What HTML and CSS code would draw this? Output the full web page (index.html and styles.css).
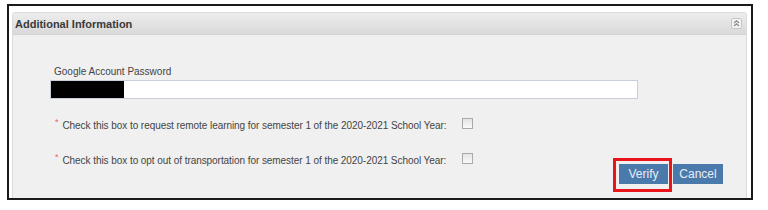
FILE: index.html
```html
<!DOCTYPE html>
<html lang="en">
<head>
  <meta charset="UTF-8" />
  <title>Additional Information</title>
  <link rel="stylesheet" href="styles.css">
</head>
<body>

<div class="frame">
  <div class="panel">
    <div class="panel-header">
      <span class="panel-title">Additional Information</span>
      <span class="collapse-btn">
        <svg width="11" height="11" viewBox="0 0 11 11">
          <rect x="0.5" y="0.5" width="10" height="10" rx="1.5" fill="#f3f3f3" stroke="#c6c6c6"/>
          <path d="M3 5 L5.5 2.8 L8 5 M3 8 L5.5 5.8 L8 8" fill="none" stroke="#8a8a8a" stroke-width="1.1"/>
        </svg>
      </span>
    </div>

    <div class="panel-body">
      <label class="field-label">Google Account Password</label>
      <div class="password-box">
        <div class="redacted"></div>
      </div>

      <div class="footer">
        <div class="checks">
          <div class="check-row">
            <span class="req">*</span>
            <span>Check this box to request remote learning for semester 1 of the 2020-2021 School Year:</span>
            <input type="checkbox" class="check">
          </div>
          <div class="check-row">
            <span class="req">*</span>
            <span>Check this box to opt out of transportation for semester 1 of the 2020-2021 School Year:</span>
            <input type="checkbox" class="check">
          </div>
        </div>

        <div class="actions">
          <span class="highlight">
            <button class="btn">Verify</button>
          </span>
          <button class="btn btn-cancel">Cancel</button>
        </div>
      </div>
    </div>
  </div>
</div>

</body>
</html>
```

FILE: styles.css
```css
* {
  box-sizing: border-box;
}

body {
  margin: 0;
  background: #fff;
  font-family: 'Liberation Sans', Arial, sans-serif;
  color: #333;
}

.frame {
  width: 746px;
  margin: 4px 0 0 7px;
  border: 2px solid #1a1a1a;
  padding: 6px 4px 0 3px;
}

.panel {
  border: 1px solid #dcdcdc;
  border-bottom: none;
  border-radius: 3px 3px 0 0;
  background: #f0f0f0;
}

.panel-header {
  height: 22px;
  display: flex;
  align-items: center;
  justify-content: space-between;
  padding: 0 4px 0 2px;
  background: linear-gradient(#ededed, #d9d9d9);
  border-bottom: 1px solid #d2d2d2;
}

.panel-title {
  font-size: 11px;
  font-weight: bold;
  color: #3a3a3a;
}

.collapse-btn {
  display: flex;
}

.panel-body {
  padding: 31px 23px 6px 37px;
}

.field-label {
  display: block;
  margin-left: 4px;
  font-size: 10px;
  line-height: 12px;
  color: #444;
}

.password-box {
  margin-top: 2px;
  height: 19px;
  width: 588px;
  border: 1px solid #c9cedb;
  background: #fff;
}

.redacted {
  width: 73px;
  height: 100%;
  background: #000;
}

.footer {
  display: flex;
  justify-content: space-between;
}

.checks {
  padding: 19px 0 25px 5px;
}

.check-row {
  display: flex;
  align-items: center;
  height: 14px;
  font-size: 10px;
  letter-spacing: -0.06px;
  color: #444;
}

.check-row + .check-row {
  margin-top: 21px;
}

.req {
  align-self: flex-start;
  margin-right: 4px;
  font-size: 9px;
  line-height: 9px;
  color: #f06060;
}

.check {
  appearance: none;
  width: 11px;
  height: 11px;
  margin: -4px 0 0 16px;
  border: 1px solid #a9a9a9;
  background: linear-gradient(#e4e4e4, #fafafa);
}

.actions {
  align-self: flex-end;
  display: flex;
  align-items: flex-start;
}

.highlight {
  display: flex;
  padding: 3px 1px 5px 3px;
  border: 3px solid #e8141a;
}

.btn {
  height: 20px;
  width: 49px;
  padding: 0;
  border: none;
  background: #4a79ab;
  color: #e8eef6;
  font-family: 'Liberation Sans', Arial, sans-serif;
  font-size: 12px;
}

.btn-cancel {
  width: 50px;
  margin: 6px 0 0 1px;
}
```
